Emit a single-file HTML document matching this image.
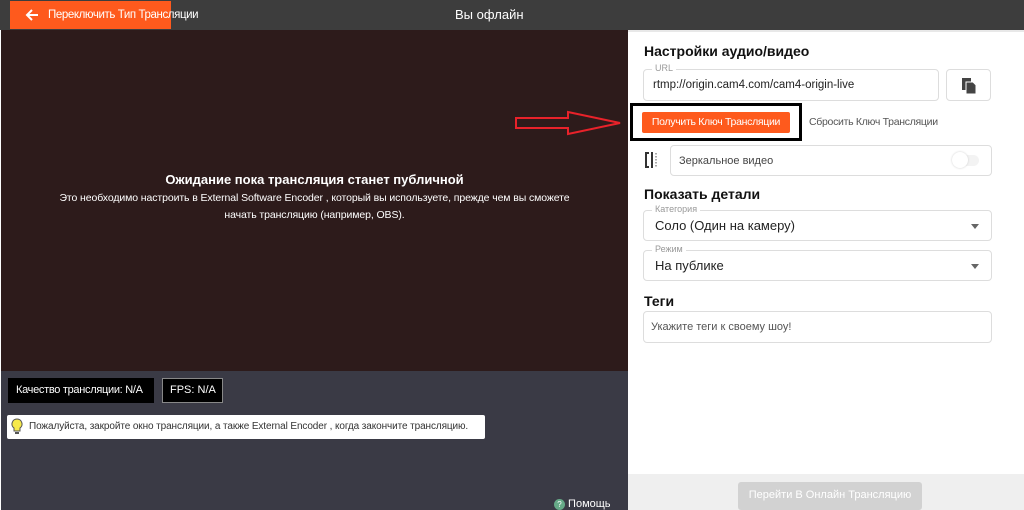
<!DOCTYPE html>
<html><head><meta charset="utf-8"><style>
*{box-sizing:border-box;margin:0;padding:0}
body{width:1024px;height:510px;overflow:hidden;font-family:"Liberation Sans",sans-serif;background:#fff;position:relative}
.top{position:absolute;left:0;top:0;width:1024px;height:30px;background:#3d3d3d}
.sw{position:absolute;left:10px;top:1px;width:161px;height:28px;background:#fe5a1d;color:#fff;font-size:11.5px;letter-spacing:-0.4px;line-height:28px;padding-left:38px;white-space:nowrap}
.title{position:absolute;left:455px;top:7px;color:#fff;font-size:13px}
.video{position:absolute;left:1px;top:30px;width:627px;height:341px;background:#2d1b1b}
.lower{position:absolute;left:1px;top:371px;width:627px;height:139px;background:#3a3a45}
.right{position:absolute;left:628px;top:30px;width:396px;height:480px;background:#fff}
.foot{position:absolute;left:628px;top:474px;width:396px;height:36px;background:#efefef}
.abs{position:absolute;white-space:nowrap}
.box{position:absolute;border:1px solid #ddd;border-radius:4px;background:#fff}
.lbl{position:absolute;top:-7px;left:8px;background:#fff;padding:0 3px;font-size:9px;color:#999}
h3{position:absolute;font-size:14px;font-weight:bold;color:#111}
</style></head><body>
<div class="top">
<div class="sw">Переключить Тип Трансляции</div>
<svg class="abs" style="left:24px;top:7px" width="16" height="16" viewBox="0 0 16 16"><path d="M14 8H3M8 3L3 8l5 5" stroke="#fff" stroke-width="2" fill="none"/></svg>
<div class="title">Вы офлайн</div>
</div>
<div class="video">
<div class="abs" style="left:0;width:627px;top:142px;text-align:center;color:#fff;font-weight:bold;font-size:13px">Ожидание пока трансляция станет публичной</div>
<div class="abs" style="left:46px;width:535px;top:160px;text-align:center;color:#fff;font-size:10.5px;line-height:17px;white-space:normal;letter-spacing:-0.1px">Это необходимо настроить в External Software Encoder , который вы используете, прежде чем вы сможете<br>начать трансляцию (например, OBS).</div>
<svg class="abs" style="left:513px;top:80px" width="112" height="26" viewBox="0 0 112 26"><path d="M2 8H54V2L106 13L54 24V18H2Z" stroke="#e8222a" stroke-width="2" fill="none"/></svg>
</div>
<div class="lower">
<div class="abs" style="left:7px;top:7px;width:146px;height:25px;background:#000;color:#fff;font-size:11px;letter-spacing:-0.3px;line-height:25px;padding-left:8px">Качество трансляции: N/A</div>
<div class="abs" style="left:161px;top:7px;width:61px;height:25px;background:#000;border:1px solid #888;color:#fff;font-size:11px;line-height:23px;padding-left:7px">FPS: N/A</div>
<div class="abs" style="left:6px;top:44px;width:478px;height:24px;background:#fff;border-radius:2px;font-size:10px;letter-spacing:-0.1px;color:#333;line-height:24px;padding-left:22px">Пожалуйста, закройте окно трансляции, а также External Encoder , когда закончите трансляцию.</div>
<svg class="abs" style="left:10px;top:47px" width="12" height="18" viewBox="0 0 12 18"><path d="M6 1a5 5 0 0 0-3 9v3h6v-3a5 5 0 0 0-3-9z" fill="#f6e94a" stroke="#555"/><rect x="4" y="14" width="4" height="2" fill="#555"/></svg>
<div class="abs" style="left:553px;top:127px;font-size:11px;color:#fff"><span style="display:inline-block;width:11px;height:11px;border-radius:50%;background:#6a8;color:#fff;font-size:8px;text-align:center;line-height:11px">?</span> Помощь</div>
</div>
<div class="right">
<div class="abs" style="left:0;top:0;width:396px;height:2px;background:#e8e8e8"></div>
<h3 style="left:16px;top:13px">Настройки аудио/видео</h3>
<div class="box" style="left:15px;top:39px;width:296px;height:32px"><span class="lbl">URL</span><div class="abs" style="left:9px;top:9px;font-size:11.5px;color:#222">rtmp://origin.cam4.com/cam4-origin-live</div></div>
<div class="box" style="left:318px;top:39px;width:45px;height:32px"><svg class="abs" style="left:14px;top:7px" width="16" height="18" viewBox="0 0 16 18"><rect x="1" y="1" width="9" height="12" fill="#444"/><path d="M5 5h7l3 3v9H5z" fill="#444" stroke="#fff"/></svg></div>
<div class="abs" style="left:2px;top:73px;width:172px;height:38px;border:3px solid #000"></div>
<div class="abs" style="left:14px;top:82px;width:148px;height:21px;background:#fe5a1d;color:#fff;font-size:10.5px;letter-spacing:-0.3px;text-align:center;line-height:21px;border-radius:2px">Получить Ключ Трансляции</div>
<div class="abs" style="left:181px;top:86px;font-size:10.5px;letter-spacing:-0.3px;color:#555">Сбросить Ключ Трансляции</div>
<svg class="abs" style="left:16px;top:121px" width="16" height="18" viewBox="0 0 16 18"><path d="M5 2H2v14h3M8 1v16" stroke="#333" stroke-width="2" fill="none"/><path d="M12 2v14" stroke="#555" stroke-dasharray="1.5 1.5" fill="none"/></svg>
<div class="box" style="left:42px;top:115px;width:322px;height:31px"><div class="abs" style="left:8px;top:9px;font-size:11px;color:#444">Зеркальное видео</div><div class="abs" style="left:282px;top:9px;width:26px;height:11px;border-radius:6px;background:#f3f3f3"></div><div class="abs" style="left:281px;top:6px;width:16px;height:16px;border-radius:50%;background:#fff;box-shadow:0 0 2px #ccc"></div></div>
<h3 style="left:16px;top:156px">Показать детали</h3>
<div class="box" style="left:15px;top:180px;width:349px;height:31px"><span class="lbl">Категория</span><div class="abs" style="left:11px;top:7px;font-size:13px;color:#222">Соло (Один на камеру)</div><div class="abs" style="left:327px;top:13px;border:4px solid transparent;border-top:5px solid #666"></div></div>
<div class="box" style="left:15px;top:220px;width:349px;height:31px"><span class="lbl">Режим</span><div class="abs" style="left:11px;top:7px;font-size:13px;color:#222">На публике</div><div class="abs" style="left:327px;top:13px;border:4px solid transparent;border-top:5px solid #666"></div></div>
<h3 style="left:16px;top:263px">Теги</h3>
<div class="box" style="left:15px;top:281px;width:349px;height:32px"><div class="abs" style="left:7px;top:9px;font-size:11px;color:#555">Укажите теги к своему шоу!</div></div>
</div>
<div class="foot"><div class="abs" style="left:110px;top:8px;width:184px;height:28px;background:#d2d2d2;border-radius:3px;color:#fff;font-size:11px;text-align:center;line-height:27px">Перейти В Онлайн Трансляцию</div></div>
</body></html>
